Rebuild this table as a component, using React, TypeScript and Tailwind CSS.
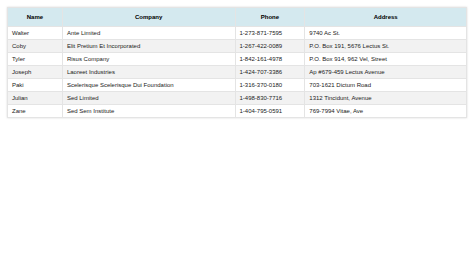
import React from "react";

const rows = [
  ["Walter", "Ante Limited", "1-273-871-7595", "9740 Ac St."],
  ["Coby", "Elit Pretium Et Incorporated", "1-267-422-0089", "P.O. Box 191, 5676 Lectus St."],
  ["Tyler", "Risus Company", "1-842-161-4978", "P.O. Box 914, 962 Vel, Street"],
  ["Joseph", "Laoreet Industries", "1-424-707-3386", "Ap #679-459 Lectus Avenue"],
  ["Paki", "Scelerisque Scelerisque Dui Foundation", "1-316-370-0180", "703-1621 Dictum Road"],
  ["Julian", "Sed Limited", "1-498-830-7716", "1312 Tincidunt, Avenue"],
  ["Zane", "Sed Sem Institute", "1-404-795-0591", "769-7994 Vitae, Ave"],
];

export default function App() {
  return (
    <div className="w-[474px] h-[266px] bg-white pt-[7px] pl-[7px]" style={{ fontFamily: '"Liberation Sans", Arial, sans-serif' }}>
      <table className="border-collapse w-[460px] text-[6px] text-[#222] shadow-[0_0_2px_rgba(0,0,0,0.15)]">
        <colgroup>
          <col className="w-[55px]" />
          <col className="w-[173px]" />
          <col className="w-[70px]" />
          <col className="w-[162px]" />
        </colgroup>
        <thead>
          <tr className="bg-[#d4e9ef] h-[19px]">
            {["Name", "Company", "Phone", "Address"].map((h) => (
              <th key={h} className="border border-[#e4e4e4] font-bold text-center text-black p-0">{h}</th>
            ))}
          </tr>
        </thead>
        <tbody>
          {rows.map((r, i) => (
            <tr key={i} className={`h-[13px] ${i % 2 === 1 ? "bg-[#f2f2f2]" : "bg-white"}`}>
              {r.map((c, j) => (
                <td key={j} className="border border-[#e4e4e4] px-[4px] py-0 leading-none">{c}</td>
              ))}
            </tr>
          ))}
        </tbody>
      </table>
    </div>
  );
}
